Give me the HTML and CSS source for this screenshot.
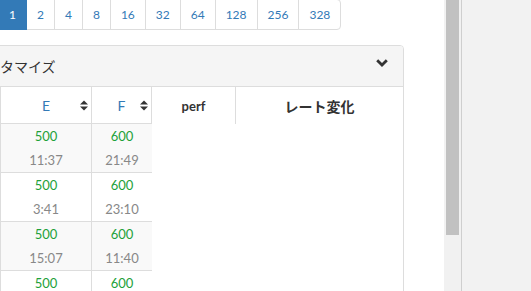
FILE: index.html
```html
<!DOCTYPE html>
<html lang="ja">
<head>
<meta charset="utf-8">
<title>Table</title>
<link rel="stylesheet" href="styles.css">
</head>
<body>
<div class="app">
  <div class="main">
    <ul class="pagination">
      <li class="active"><a>1</a></li>
      <li><a>2</a></li>
      <li><a>4</a></li>
      <li><a>8</a></li>
      <li><a>16</a></li>
      <li><a>32</a></li>
      <li><a>64</a></li>
      <li><a>128</a></li>
      <li><a>256</a></li>
      <li class="last"><a>328</a></li>
    </ul>
    <div class="panel">
      <div class="panel-heading">
        <span class="panel-title">カスタマイズ</span>
        <svg class="chevron" width="12" height="8" viewBox="0 0 12 8"><polyline points="1.2,1.2 6,6 10.8,1.2" fill="none" stroke="#333" stroke-width="2.8"/></svg>
      </div>
      <div class="panel-body">
        <div class="thead">
          <div class="th th-e sortable">
            <span class="th-label">E</span>
            <svg class="sort" width="8" height="11" viewBox="0 0 8 11"><polygon points="0,4.5 4,0.5 8,4.5" fill="#333"/><polygon points="0,6.5 4,10.5 8,6.5" fill="#333"/></svg>
          </div>
          <div class="th th-f sortable">
            <span class="th-label">F</span>
            <svg class="sort" width="8" height="11" viewBox="0 0 8 11"><polygon points="0,4.5 4,0.5 8,4.5" fill="#333"/><polygon points="0,6.5 4,10.5 8,6.5" fill="#333"/></svg>
          </div>
          <div class="th th-perf">perf</div>
          <div class="th th-rate">レート変化</div>
        </div>
        <div class="row striped">
          <div class="td td-e"><span class="val">500</span><span class="time">11:37</span></div>
          <div class="td td-f"><span class="val">600</span><span class="time">21:49</span></div>
        </div>
        <div class="row">
          <div class="td td-e"><span class="val">500</span><span class="time">3:41</span></div>
          <div class="td td-f"><span class="val">600</span><span class="time">23:10</span></div>
        </div>
        <div class="row striped">
          <div class="td td-e"><span class="val">500</span><span class="time">15:07</span></div>
          <div class="td td-f"><span class="val">600</span><span class="time">11:40</span></div>
        </div>
        <div class="row">
          <div class="td td-e"><span class="val">500</span><span class="time">8:02</span></div>
          <div class="td td-f"><span class="val">600</span><span class="time">9:15</span></div>
        </div>
      </div>
    </div>
  </div>
  <div class="scrollbar"><div class="thumb"></div></div>
  <div class="sidebar"></div>
</div>
</body>
</html>
```
FILE: styles.css
```css
html, body {
  margin: 0;
  padding: 0;
  background: #fff;
}
body {
  font-family: Lato, "Noto Sans CJK JP", sans-serif;
  color: #333;
}
.app {
  display: flex;
  width: 531px;
  height: 291px;
  overflow: hidden;
}
.main {
  width: 444px;
  flex: none;
  overflow: hidden;
}
.scrollbar {
  width: 17px;
  flex: none;
  background: #f1f1f1;
}
.thumb {
  margin: 0 2px;
  height: 235px;
  background: #c1c1c1;
}
.sidebar {
  flex: 1;
  background: #f2f2f2;
  border-left: 1px solid #cfcfcf;
}

/* pagination */
.pagination {
  display: flex;
  list-style: none;
  margin: -1px 0 0 -2px;
  padding: 0;
}
.pagination li {
  margin-left: -1px;
}
.pagination li:first-child {
  margin-left: 0;
}
.pagination a {
  display: block;
  padding: 6px 10px;
  font-size: 12px;
  line-height: 17px;
  color: #337ab7;
  background: #fff;
  border: 1px solid #ddd;
}
.pagination .active a {
  position: relative;
  z-index: 2;
  background: #337ab7;
  border-color: #337ab7;
  color: #fff;
}
.pagination .last a {
  border-radius: 0 4px 4px 0;
}

/* panel */
.panel {
  margin: 15px 0 0 -44px;
  width: 448px;
  border: 1px solid #ddd;
  border-radius: 4px 4px 0 0;
  height: 400px;
  box-sizing: border-box;
}
.panel-heading {
  display: flex;
  justify-content: space-between;
  padding: 10px 15px;
  background: #f5f5f5;
  border-bottom: 1px solid #ddd;
  border-radius: 3px 3px 0 0;
  font-size: 14px;
  line-height: 20px;
  font-family: "Noto Sans CJK JP", sans-serif;
}
.chevron {
  display: block;
  margin-top: 3px;
}
.panel-body {
  padding-left: 43px;
}

/* table */
.thead {
  display: flex;
  height: 37px;
}
.th {
  box-sizing: border-box;
  height: 37px;
  display: flex;
  align-items: center;
  justify-content: center;
  font-size: 14px;
  font-weight: bold;
}
.sortable {
  display: grid;
  grid-template-columns: 1fr auto 1fr;
  align-items: center;
  border-right: 1px solid #ddd;
  border-bottom: 1px solid #ddd;
}
.th-label {
  grid-column: 2;
  color: #337ab7;
  font-weight: normal;
}
.sort {
  grid-column: 3;
  justify-self: end;
  margin-right: 3px;
  display: block;
}
.th-e {
  width: 92px;
  border-left: 1px solid #ddd;
}
.th-f {
  width: 60px;
}
.th-perf {
  width: 84px;
  border-right: 1px solid #ddd;
  font-size: 13px;
}
.th-rate {
  flex: 1;
  font-family: "Noto Sans CJK JP", sans-serif;
}
.row {
  display: flex;
}
.td {
  box-sizing: border-box;
  display: flex;
  flex-direction: column;
  align-items: center;
  height: 49px;
  border-bottom: 1px solid #ddd;
  font-size: 13px;
  line-height: 24px;
}
.td-e {
  width: 92px;
  border-left: 1px solid #ddd;
  border-right: 1px solid #ddd;
}
.td-f {
  width: 60px;
}
.striped .td {
  background: #f9f9f9;
}
.val {
  color: #1ea13a;
}
.time {
  color: #888;
}
```
